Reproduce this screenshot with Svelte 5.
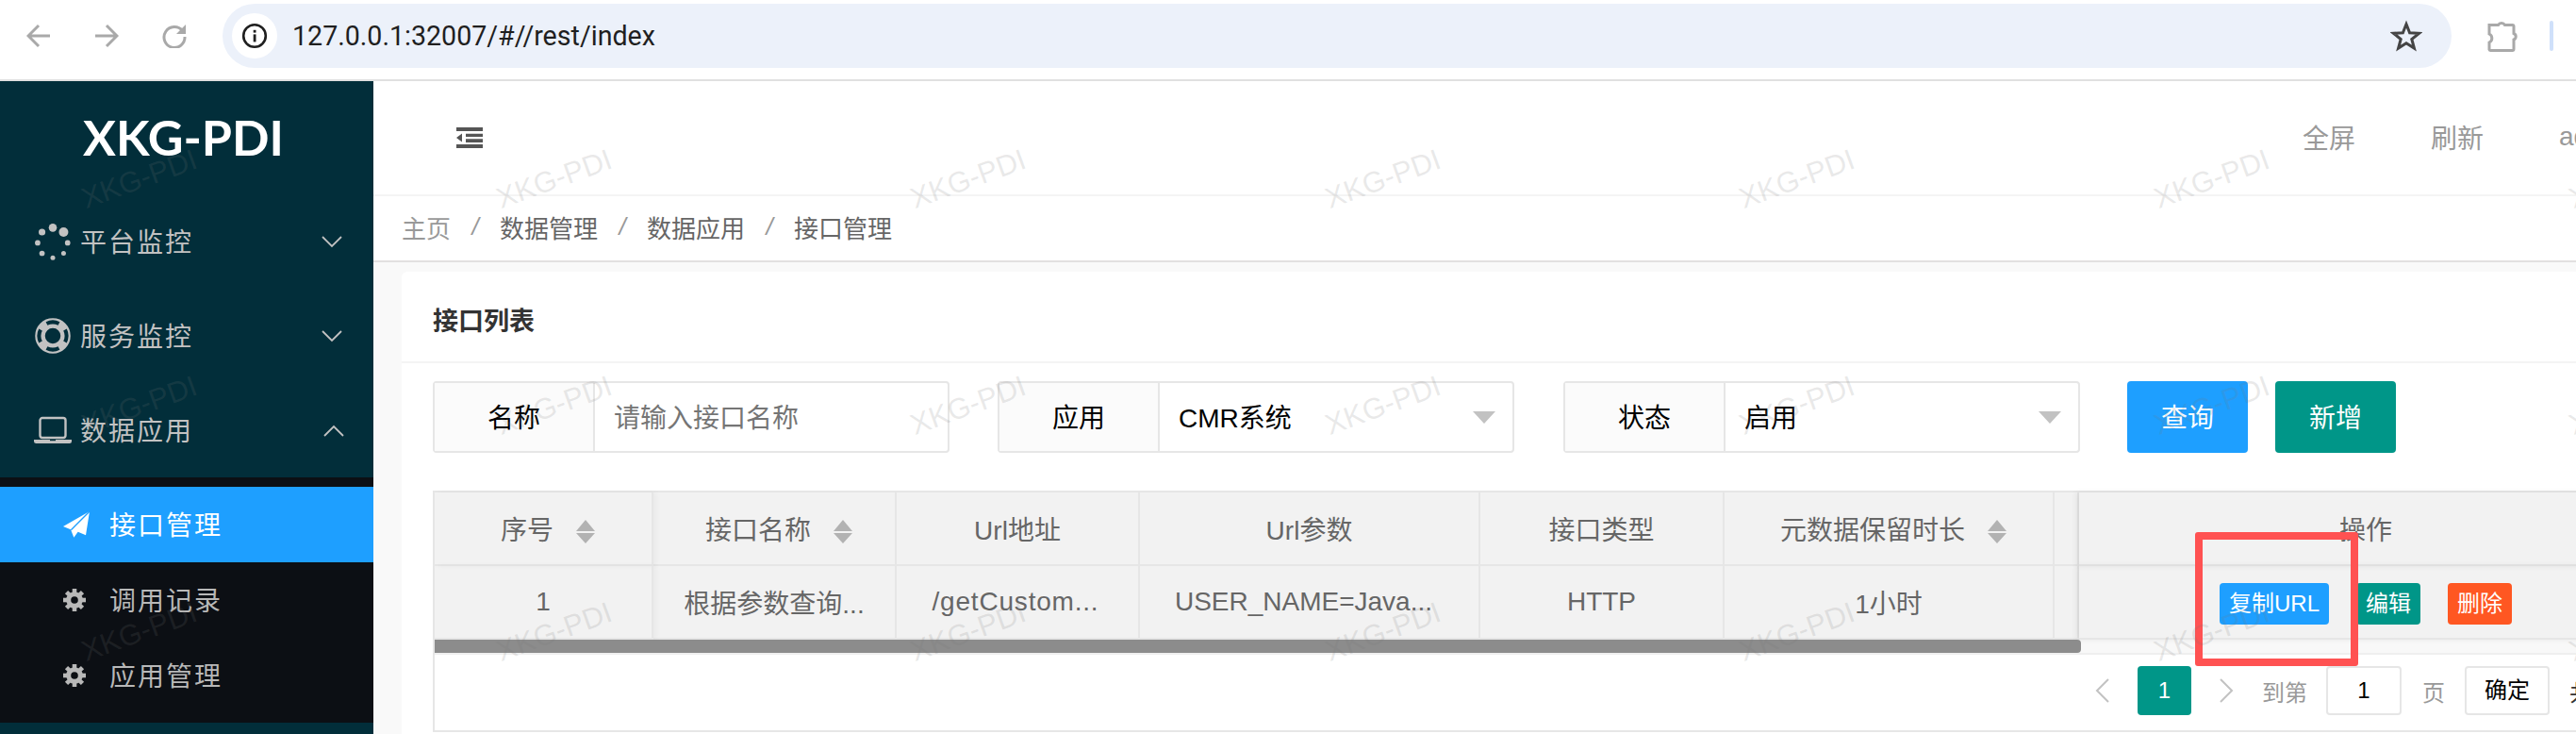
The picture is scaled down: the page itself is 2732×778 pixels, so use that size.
<script>
  const menus = [
    { label: '平台监控', icon: 'spin', open: false },
    { label: '服务监控', icon: 'ring', open: false },
    { label: '数据应用', icon: 'laptop', open: true }
  ];
  const subs = [
    { label: '接口管理', icon: 'plane', active: true },
    { label: '调用记录', icon: 'gear' },
    { label: '应用管理', icon: 'gear' }
  ];
  const dots = [
    [108, 65, 12], [140, 78, 14], [152, 110, 8], [140, 141, 7],
    [108, 154, 7], [76, 141, 8], [63, 110, 8], [76, 78, 10]
  ];
  const crumbs = ['主页', '数据管理', '数据应用', '接口管理'];
  const columns = [
    { title: '序号', value: '1', width: 232, sort: true },
    { title: '接口名称', value: '根据参数查询...', width: 258, sort: true },
    { title: 'Url地址', value: '/getCustom...', width: 258, cls: 'path' },
    { title: 'Url参数', value: 'USER_NAME=Java...', width: 361, cls: 'args' },
    { title: '接口类型', value: 'HTTP', width: 259 },
    { title: '元数据保留时长', value: '1小时', width: 350, sort: true },
    { title: '', value: '', width: 26 }
  ];
  const teeth = [0, 45, 90, 135, 180, 225, 270, 315];
  const marks = Array.from({ length: 21 });
</script>

<div class="page">
  <div class="chrome">
    <svg class="nav-icon back" width="26" height="26" viewBox="0 0 26 26"><path d="M25 13H2M13 2 2 13l11 11" /></svg>
    <svg class="nav-icon forward" width="26" height="26" viewBox="0 0 26 26"><path d="M1 13h23M13 2l11 11-11 11" /></svg>
    <svg class="nav-icon reload" width="26" height="26" viewBox="0 0 26 26">
      <path d="M21.5 7.5A11 11 0 1 0 24 14" />
      <path class="solid" d="M25 1v10H15z" />
    </svg>
    <div class="omnibox">
      <span class="site-info">
        <svg width="28" height="28" viewBox="0 0 28 28">
          <circle cx="14" cy="14" r="11.8" fill="none" stroke="#1f1f1f" stroke-width="2.6" />
          <rect x="12.7" y="12.4" width="2.8" height="8" fill="#1f1f1f" />
          <rect x="12.7" y="7.8" width="2.8" height="2.8" fill="#1f1f1f" />
        </svg>
      </span>
      <span class="url">127.0.0.1:32007/#//rest/index</span>
      <svg class="star" width="34" height="34" viewBox="0 0 34 34"><path d="M17 4.5l3.6 9.2 9.9.6-7.7 6.2 2.6 9.6-8.4-5.4-8.4 5.4 2.6-9.6-7.7-6.2 9.9-.6z" /></svg>
    </div>
    <svg class="puzzle" width="36" height="36" viewBox="0 0 36 36">
      <path d="M4 6.500h9.500a4 4 0 0 1 7 0h8a1.500 1.500 0 0 1 1.500 1.500v7.500a3.500 3.500 0 0 1 0 6.500v10a1.500 1.500 0 0 1-1.500 1.500H5.500A1.500 1.500 0 0 1 4 32.500v-7.500a5 5 0 0 0 0-9z" />
    </svg>
    <span class="divider"></span>
  </div>

  <div class="workspace">
    <aside class="sidebar">
      <div class="logo">XKG-PDI</div>
      {#each menus as menu}
        <div class="menu-item">
          <span class="menu-icon">
            {#if menu.icon === 'spin'}
              <svg width="40" height="40" viewBox="52 50 112 112">
                {#each dots as d}<circle cx={d[0]} cy={d[1]} r={d[2]} fill="#c2c2c2" />{/each}
              </svg>
            {:else if menu.icon === 'ring'}
              <svg width="40" height="40" viewBox="-20 -20 40 40">
                <circle r="13.500" fill="none" stroke="#c2c2c2" stroke-width="10.500" />
                <path class="gap" d="M-6.500-13a14.500 14.500 0 0 1 13 0" />
                <path class="gap" d="M-6.500 13a14.500 14.500 0 0 0 13 0" />
                <path class="gap" d="M-13-6.500a14.500 14.500 0 0 0 0 13" />
                <path class="gap" d="M13-6.500a14.500 14.500 0 0 1 0 13" />
              </svg>
            {:else}
              <svg width="40" height="30" viewBox="0 0 40 30">
                <rect x="6.500" y="2" width="27" height="21" rx="2.500" fill="none" stroke="#c2c2c2" stroke-width="2.400" />
                <path d="M0 25h40v1.500A2.500 2.500 0 0 1 37.500 29h-35A2.500 2.500 0 0 1 0 26.500z" fill="#c2c2c2" />
                <rect x="17" y="25" width="6" height="1.200" fill="#022e3a" />
              </svg>
            {/if}
          </span>
          <span class="menu-label">{menu.label}</span>
          <svg class="chevron" class:open={menu.open} width="22" height="13" viewBox="0 0 22 13"><path d="M1 1l10 10L21 1" /></svg>
        </div>
      {/each}
      <div class="submenu">
        {#each subs as sub}
          <div class="sub-item" class:active={sub.active}>
            <span class="sub-icon">
              {#if sub.icon === 'plane'}
                <svg width="30" height="30" viewBox="135 124 90 90">
                  <path d="M222 127 138 175l24 10 10 25 13-18 25 11z" fill="#fff" />
                  <path d="M222 127 163 186" stroke="#1e9fff" stroke-width="4" fill="none" />
                </svg>
              {:else}
                <svg width="26" height="26" viewBox="-13 -13 26 26">
                  <circle r="6.300" fill="none" stroke="#b8b8b8" stroke-width="5" />
                  {#each teeth as t}
                    <rect x="-2.300" y="-12" width="4.600" height="4.500" fill="#b8b8b8" transform="rotate({t})" />
                  {/each}
                </svg>
              {/if}
            </span>
            <span class="menu-label">{sub.label}</span>
          </div>
        {/each}
      </div>
    </aside>

    <main class="main">
      <header class="topbar">
        <svg class="fold" width="28" height="22" viewBox="0 0 28 22">
          <path d="M0 0h28v4H0zM10 6.700h18V10H10zM10 12.300h18V16H10zM0 18h28v4H0zM6 6.500v9l-6-4.500z" fill="#555" />
        </svg>
        <span class="top-link first">全屏</span>
        <span class="top-link">刷新</span>
        <span class="top-link user">admin</span>
      </header>

      <nav class="crumbs">
        {#each crumbs as crumb, i}
          {#if i > 0}<span class="sep">/</span>{/if}
          <span class:home={i === 0}>{crumb}</span>
        {/each}
      </nav>

      <div class="content">
        <section class="card">
          <h2 class="card-title">接口列表</h2>
          <div class="card-body">
            <div class="filters">
              <div class="field name">
                <span class="field-label">名称</span>
                <span class="field-value placeholder">请输入接口名称</span>
              </div>
              <div class="field app">
                <span class="field-label">应用</span>
                <span class="field-value">CMR系统</span>
                <i class="caret"></i>
              </div>
              <div class="field state">
                <span class="field-label">状态</span>
                <span class="field-value">启用</span>
                <i class="caret"></i>
              </div>
              <button class="btn blue search">查询</button>
              <button class="btn green">新增</button>
            </div>

            <div class="table-box">
              <table>
                <colgroup>
                  {#each columns as col}<col style="width: {col.width}px" />{/each}
                  <col style="width: 608px" />
                </colgroup>
                <thead>
                  <tr>
                    {#each columns as col}
                      <th class:sorted={col.sort}>
                        {col.title}
                        {#if col.sort}
                          <span class="sort"><i class="up"></i><i class="down"></i></span>
                        {/if}
                      </th>
                    {/each}
                    <th>操作</th>
                  </tr>
                </thead>
                <tbody>
                  <tr>
                    {#each columns as col}<td class={col.cls}>{col.value}</td>{/each}
                    <td>
                      <div class="actions">
                        <span class="tag blue">复制URL</span>
                        <span class="tag green">编辑</span>
                        <span class="tag orange">删除</span>
                      </div>
                    </td>
                  </tr>
                </tbody>
              </table>
              <div class="scrollbar"><span class="thumb"></span></div>
              <div class="pager">
                <svg class="page-arrow" width="16" height="26" viewBox="0 0 16 26"><path d="M14 1 2 13l12 12" /></svg>
                <span class="page-num">1</span>
                <svg class="page-arrow" width="16" height="26" viewBox="0 0 16 26"><path d="M2 1l12 12L2 25" /></svg>
                <span class="page-text">到第</span>
                <span class="page-input">1</span>
                <span class="page-text unit">页</span>
                <span class="page-ok">确定</span>
                <span class="page-text total">共 1 条</span>
              </div>
            </div>
          </div>
        </section>
      </div>
      <div class="highlight"></div>
    </main>

    <div class="watermarks">
      {#each marks as _}<span>XKG-PDI</span>{/each}
    </div>
  </div>
</div>

<style>
  :global(body) {
    margin: 0;
    background: #fff;
  }

  .page {
    width: 2732px;
    height: 778px;
    overflow: hidden;
    font-family: "Liberation Sans", "Noto Sans CJK SC", sans-serif;
    font-size: 28px;
    color: #666;
  }

  /* browser bar */
  .chrome {
    display: flex;
    align-items: center;
    height: 76px;
    padding-bottom: 8px;
    border-bottom: 2px solid #e0e0e0;
    box-sizing: content-box;
  }

  .nav-icon path {
    fill: none;
    stroke: #a9a9a9;
    stroke-width: 3;
  }

  .nav-icon .solid {
    fill: #a9a9a9;
    stroke: none;
  }

  .back { margin-left: 28px; }
  .forward { margin-left: 46px; }
  .reload { margin-left: 46px; }

  .omnibox {
    display: flex;
    align-items: center;
    width: 2364px;
    height: 68px;
    margin-left: 38px;
    border-radius: 34px;
    background: #ecf1fa;
  }

  .site-info {
    display: flex;
    align-items: center;
    justify-content: center;
    width: 48px;
    height: 48px;
    margin-left: 10px;
    border-radius: 50%;
    background: #fff;
  }

  .url {
    margin-left: 16px;
    font-family: Roboto, sans-serif;
    font-size: 28.6px;
    color: #1f1f1f;
  }

  .star {
    margin-left: auto;
    margin-right: 31px;
  }

  .star path {
    fill: none;
    stroke: #444;
    stroke-width: 3;
  }

  .puzzle {
    margin-left: 36px;
  }

  .puzzle path {
    fill: none;
    stroke: #a9a9a9;
    stroke-width: 3;
  }

  .divider {
    width: 4px;
    height: 32px;
    margin-left: 32px;
    border-radius: 2px;
    background: #cfe0fa;
  }

  /* shell */
  .workspace {
    position: relative;
    display: flex;
    height: 692px;
  }

  .sidebar {
    flex: none;
    width: 396px;
    background: #022e3a;
    color: #c2c2c2;
  }

  .logo {
    height: 119px;
    padding: 1px 7px 0 0;
    box-sizing: content-box;
    font-family: Lato, sans-serif;
    font-size: 52px;
    font-weight: 700;
    line-height: 116px;
    text-align: center;
    color: #fff;
  }

  .menu-item {
    display: flex;
    align-items: center;
    height: 100px;
    padding-left: 36px;
    letter-spacing: 2px;
  }

  .menu-label {
    padding-bottom: 3px;
  }

  .menu-icon {
    display: flex;
    align-items: center;
    justify-content: center;
    width: 40px;
    margin-right: 9px;
  }

  .gap {
    fill: none;
    stroke: #022e3a;
    stroke-width: 4;
  }

  .chevron {
    margin-left: auto;
    margin-right: 33px;
  }

  .chevron path {
    fill: none;
    stroke: #c2c2c2;
    stroke-width: 1.800;
  }

  .chevron.open {
    margin-right: 31px;
    transform: scaleY(-1);
  }

  .submenu {
    height: 240px;
    padding: 10px 0;
    background: #0c0f14;
  }

  .sub-item {
    display: flex;
    align-items: center;
    height: 80px;
    padding-left: 66px;
    letter-spacing: 2px;
    color: #b8b8b8;
  }

  .sub-item.active {
    background: #1e9fff;
    color: #fff;
  }

  .sub-icon {
    display: flex;
    align-items: center;
    width: 50px;
  }

  .main {
    position: relative;
    flex: none;
    width: 2336px;
  }

  .topbar {
    display: flex;
    align-items: center;
    height: 120px;
    padding-left: 88px;
    border-bottom: 2px solid #f4f4f4;
    color: #999;
    box-sizing: content-box;
  }

  .fold {
    flex: none;
  }

  .top-link {
    margin-left: 80px;
    padding-bottom: 3px;
    flex: none;
  }

  .top-link.first {
    margin-left: 1930px;
  }

  .crumbs {
    display: flex;
    align-items: center;
    gap: 21px;
    height: 65px;
    padding: 0 0 3px 30px;
    border-bottom: 2px solid #e2e0e0;
    font-size: 26px;
    color: #666;
  }

  .crumbs .home,
  .sep {
    color: #999;
  }

  .sep {
    width: 10px;
    font-style: italic;
    text-align: center;
  }

  .content {
    height: 500px;
    padding: 10px 0 0 30px;
    background: #f9f9f9;
  }

  .card {
    width: 2500px;
    height: 500px;
    border-radius: 6px 0 0 0;
    background: #fff;
  }

  .card-title {
    height: 83px;
    margin: 0;
    padding: 12px 0 0 33px;
    border-bottom: 2px solid #f4f4f4;
    font-size: 27px;
    font-weight: 700;
    line-height: 82px;
    color: #333;
    box-sizing: content-box;
  }

  .card-body {
    padding: 19px 0 0 33px;
  }

  .filters {
    display: flex;
    height: 76px;
    margin-bottom: 40px;
  }

  .field {
    position: relative;
    display: flex;
    align-items: center;
    height: 76px;
    box-sizing: border-box;
    border: 2px solid #e6e6e6;
    border-radius: 4px;
    color: #000;
  }

  .field.name { width: 548px; }
  .field.app { width: 548px; margin-left: 51px; }
  .field.state { width: 548px; margin-left: 52px; }

  .field-label {
    display: flex;
    align-items: center;
    justify-content: center;
    flex: none;
    width: 170px;
    height: 100%;
    padding-bottom: 3px;
    box-sizing: border-box;
    border-right: 2px solid #e6e6e6;
    background: #fbfbfb;
  }

  .field-value {
    padding: 0 0 3px 20px;
  }

  .placeholder {
    color: #757575;
  }

  .caret {
    position: absolute;
    top: 30px;
    right: 18px;
    border-top: 13px solid #c2c2c2;
    border-left: 12px solid transparent;
    border-right: 12px solid transparent;
  }

  .btn {
    width: 128px;
    height: 76px;
    margin-left: 29px;
    padding: 0 0 3px;
    border: 0;
    border-radius: 4px;
    font: inherit;
    color: #fff;
  }

  .btn.search {
    margin-left: 50px;
  }

  .blue { background: #1e9fff; }
  .green { background: #009688; }
  .orange { background: #ff5722; }

  .table-box {
    width: 2354px;
    height: 252px;
    border: 2px solid #e6e6e6;
    box-sizing: content-box;
  }

  table {
    width: 2352px;
    border-collapse: separate;
    border-spacing: 0;
    table-layout: fixed;
    background: #f2f2f2;
  }

  th, td {
    height: 76px;
    padding: 0;
    border-right: 2px solid #e6e6e6;
    border-bottom: 2px solid #e6e6e6;
    font-weight: 400;
    text-align: center;
    white-space: nowrap;
    color: #666;
    box-sizing: content-box;
  }

  th.sorted {
    padding-left: 10px;
  }

  td.path {
    letter-spacing: .8px;
    padding-right: 4px;
  }

  td.args {
    padding-right: 12px;
  }

  th:first-child, td:first-child {
    position: relative;
    box-shadow: 3px 0 6px rgba(0, 0, 0, .04);
  }

  th:last-child, td:last-child {
    position: relative;
    border-right: 0;
    box-shadow: -3px 0 6px rgba(0, 0, 0, .07);
  }

  .sort {
    display: inline-flex;
    flex-direction: column;
    gap: 2px;
    margin-left: 16px;
    vertical-align: middle;
    margin-top: -3px;
  }

  .sort i {
    display: block;
    border-left: 10px solid transparent;
    border-right: 10px solid transparent;
  }

  .sort .up { border-bottom: 12px solid #b2b2b2; }
  .sort .down { border-top: 11px solid #b2b2b2; }

  .actions {
    display: flex;
    justify-content: center;
    gap: 29px;
    margin-top: 4px;
  }

  .tag {
    height: 44px;
    padding: 0 10px;
    border-radius: 4px;
    font-size: 24px;
    line-height: 44px;
    color: #fff;
  }

  .scrollbar {
    display: flex;
    height: 14px;
    border-bottom: 2px solid #efefef;
    box-sizing: content-box;
    background: #f8f8f8;
  }

  .thumb {
    position: relative;
    width: 1746px;
    border-radius: 0 4px 4px 0;
    background: #8c8c8c;
  }

  .pager {
    display: flex;
    align-items: center;
    height: 78px;
    padding: 0 0 0 1761px;
    margin-top: -1px;
    font-size: 24px;
    color: #333;
  }

  .page-arrow {
    flex: none;
  }

  .page-arrow path {
    fill: none;
    stroke: #c2c2c2;
    stroke-width: 2;
  }

  .page-num {
    flex: none;
    width: 57px;
    height: 52px;
    margin: 0 29px;
    border-radius: 4px;
    background: #009688;
    color: #fff;
    line-height: 52px;
    text-align: center;
  }

  .page-text {
    flex: none;
    margin-left: 30px;
    color: #999;
  }

  .page-text.unit {
    margin-left: 22px;
  }

  .page-text.total {
    margin-left: 21px;
    color: #333;
  }

  .page-input, .page-ok {
    flex: none;
    height: 48px;
    border: 2px solid #e6e6e6;
    border-radius: 4px;
    line-height: 48px;
    text-align: center;
  }

  .page-input {
    width: 76px;
    margin-left: 20px;
    color: #000;
  }

  .page-ok {
    width: 86px;
    margin-left: 21px;
    color: #000;
  }

  .highlight {
    position: absolute;
    left: 1932px;
    top: 478px;
    width: 173px;
    height: 142px;
    box-sizing: border-box;
    border: 8px solid #ff5252;
    border-radius: 3px;
  }

  .watermarks {
    position: absolute;
    left: -72px;
    top: -16px;
    display: grid;
    grid-template-columns: repeat(7, 439.6px);
    grid-auto-rows: 240px;
    pointer-events: none;
  }

  .watermarks span {
    display: flex;
    align-items: center;
    justify-content: center;
    font-size: 31px;
    color: rgba(120, 120, 120, .17);
    transform: rotate(-20deg);
  }
</style>
